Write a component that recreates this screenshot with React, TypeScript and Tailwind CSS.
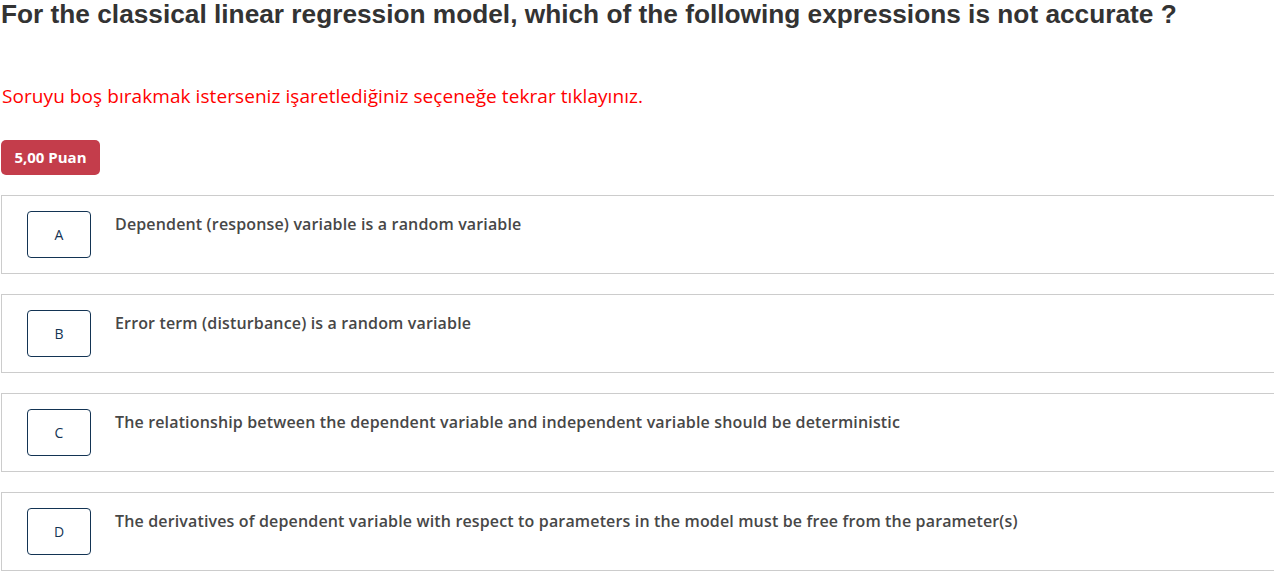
import React from "react";

const options = [
  { k: "A", t: "Dependent (response) variable is a random variable" },
  { k: "B", t: "Error term (disturbance) is a random variable" },
  { k: "C", t: "The relationship between the dependent variable and independent variable should be deterministic" },
  { k: "D", t: "The derivatives of dependent variable with respect to parameters in the model must be free from the parameter(s)" },
];

export default function App() {
  return (
    <div className="w-[1274px] h-[574px] overflow-hidden bg-white">
      <h1 className="font-['Liberation_Sans',Arial,sans-serif] font-bold text-[26.25px] leading-[29px] text-[#333333] pl-[1px] pt-0">
        For the classical linear regression model, which of the following expressions is not accurate ?
      </h1>
      <p className="font-['Open_Sans','Noto_Sans',sans-serif] text-[19px] tracking-[0.07px] leading-[24px] text-[#ff0000] pl-[2px] mt-[55px]">
        Soruyu boş bırakmak isterseniz işaretlediğiniz seçeneğe tekrar tıklayınız.
      </p>
      <div className="mt-[32px] pl-[1px]">
        <span className="inline-flex items-center justify-center h-[35px] w-[99px] rounded-[5px] bg-[#c43d4b] text-white font-['Open_Sans','Noto_Sans',sans-serif] font-bold text-[15px]">
          5,00 Puan
        </span>
      </div>
      <div className="mt-[20px] flex flex-col gap-[20px] pl-[1px] font-['Open_Sans','Noto_Sans',sans-serif]">
        {options.map((o) => (
          <div key={o.k} className="w-[1290px] h-[79px] border border-[#cccccc] flex items-start pt-[15px] pl-[25px]">
            <div className="w-[64px] h-[47px] border border-[#133454] rounded-[4px] flex items-center justify-center text-[14px] text-[#133454] shrink-0">
              {o.k}
            </div>
            <div className="ml-[24px] text-[16px] tracking-[0.15px] font-semibold text-[#474747] leading-[22px] mt-[2px]">
              {o.t}
            </div>
          </div>
        ))}
      </div>
    </div>
  );
}
